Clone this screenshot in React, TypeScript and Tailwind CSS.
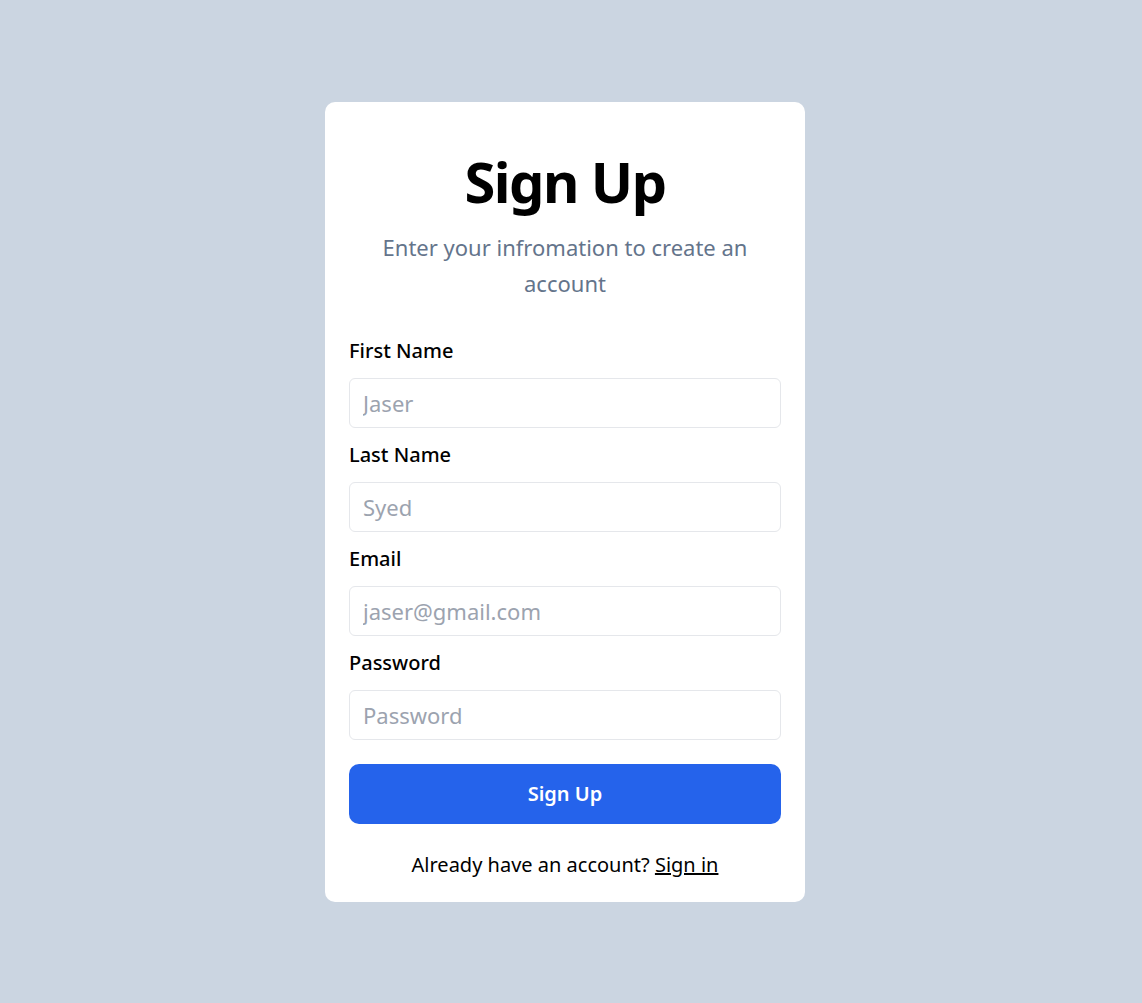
import React from "react";

const fields = [
  { label: "First Name", placeholder: "Jaser", type: "text" },
  { label: "Last Name", placeholder: "Syed", type: "text" },
  { label: "Email", placeholder: "jaser@gmail.com", type: "email" },
  { label: "Password", placeholder: "Password", type: "password" },
];

export default function App() {
  return (
    <div
      className="min-h-[1003px] bg-[#cbd5e1] flex justify-center pt-[102px] pr-3"
      style={{ fontFamily: '"Noto Sans", "Open Sans", sans-serif' }}
    >
      <div className="w-[480px] h-[800px] bg-white rounded-[10px] px-6 pt-[47px]">
        <h1 className="text-center text-[56px] leading-[64px] font-bold tracking-[-1.5px] text-black">Sign Up</h1>
        <p className="mt-4 mx-auto w-[390px] text-center text-[22px] leading-[36px] text-[#64748b]">
          Enter your infromation to create an account
        </p>

        <div className="mt-[35px] flex flex-col gap-3">
          {fields.map(f => (
            <div key={f.label}>
              <label className="block text-[20px] leading-[30px] font-medium text-black">{f.label}</label>
              <input
                type={f.type}
                placeholder={f.placeholder}
                className="mt-3 w-full h-[50px] px-[13px] border border-[#e5e7eb] rounded-md text-[22px] text-black placeholder:text-[#9ca3af] outline-none"
              />
            </div>
          ))}
        </div>

        <button className="mt-6 w-full h-[60px] bg-[#2563eb] text-white rounded-[10px] text-[20px] font-semibold">
          Sign Up
        </button>

        <p className="mt-6 text-center text-[20px] leading-[33px] text-black">
          Already have an account? <a href="#" className="underline">Sign in</a>
        </p>
      </div>
    </div>
  );
}
